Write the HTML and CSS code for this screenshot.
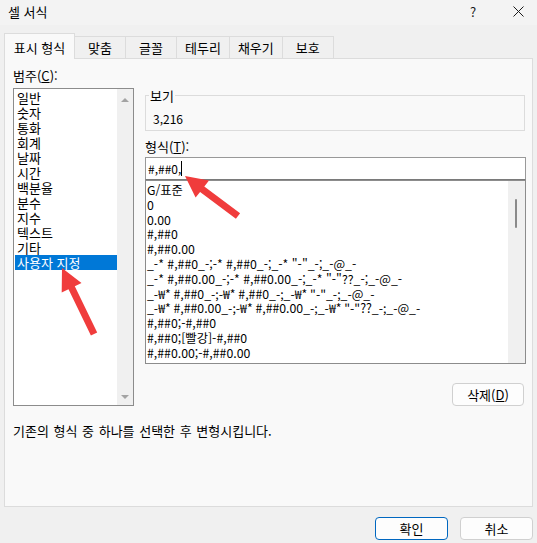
FILE: index.html
```html
<!DOCTYPE html>
<html lang="ko">

<head>
  <meta charset="UTF-8">
  <title>셀 서식</title>
  <link rel="stylesheet" href="styles.css">
</head>

<body>

  <div class="dialog">

    <header class="titlebar">
      <span class="title">셀 서식</span>
      <div class="caption-btns">
        <span class="cap-btn help">?</span>
        <span class="cap-btn">
          <svg width="11" height="11" viewBox="0 0 11 11">
            <path d="M0.5 0.5 L10.5 10.5 M10.5 0.5 L0.5 10.5" stroke="#1a1a1a" stroke-width="1" fill="none" />
          </svg>
        </span>
      </div>
    </header>

    <nav class="tabs">
      <span class="tab active">표시 형식</span>
      <span class="tab">맞춤</span>
      <span class="tab">글꼴</span>
      <span class="tab">테두리</span>
      <span class="tab">채우기</span>
      <span class="tab">보호</span>
    </nav>

    <section class="panel">

      <div class="col-category">
        <div class="label">범주(<u>C</u>):</div>
        <div class="listbox category-list">
          <ul class="items">
            <li>일반</li>
            <li>숫자</li>
            <li>통화</li>
            <li>회계</li>
            <li>날짜</li>
            <li>시간</li>
            <li>백분율</li>
            <li>분수</li>
            <li>지수</li>
            <li>텍스트</li>
            <li>기타</li>
            <li class="selected">사용자 지정</li>
          </ul>
          <div class="vscroll">
            <span class="arrow up"></span>
            <span class="arrow down"></span>
          </div>
        </div>
      </div>

      <div class="col-format">
        <fieldset class="preview">
          <legend>보기</legend>
          <div class="sample">3,216</div>
        </fieldset>

        <div class="label format-label">형식(<u>T</u>):</div>
        <div class="format-input">#,##0,<span class="caret"></span></div>

        <div class="listbox format-list">
          <ul class="items">
            <li>G/표준</li>
            <li>0</li>
            <li>0.00</li>
            <li>#,##0</li>
            <li>#,##0.00</li>
            <li>_-* #,##0_-;-* #,##0_-;_-* "-"_-;_-@_-</li>
            <li>_-* #,##0.00_-;-* #,##0.00_-;_-* "-"??_-;_-@_-</li>
            <li>_-₩* #,##0_-;-₩* #,##0_-;_-₩* "-"_-;_-@_-</li>
            <li>_-₩* #,##0.00_-;-₩* #,##0.00_-;_-₩* "-"??_-;_-@_-</li>
            <li>#,##0;-#,##0</li>
            <li>#,##0;[빨강]-#,##0</li>
            <li>#,##0.00;-#,##0.00</li>
          </ul>
          <div class="vscroll">
            <span class="thumb"></span>
          </div>
        </div>

        <div class="row-end">
          <button class="btn">삭제(<u>D</u>)</button>
        </div>
      </div>

      <p class="hint">기존의 형식 중 하나를 선택한 후 변형시킵니다.</p>
    </section>

    <footer class="actions">
      <button class="btn primary">확인</button>
      <button class="btn">취소</button>
    </footer>

    <!-- red pointer arrows drawn over the dialog -->
    <svg class="marks" width="537" height="543" viewBox="0 0 537 543">
      <polygon fill="#f03c3c"
        points="185,176 209,180.5 204.3,186.4 240.1,213.2 235.9,218.8 200.1,192 195.6,197.6" />
      <polygon fill="#f03c3c"
        points="62,268 81.5,283 74.8,286.3 97.2,332.5 90.9,335.5 68.5,289.3 61.7,292.6" />
    </svg>
  </div>

</body>

</html>
```

FILE: styles.css
```css
* {
  box-sizing: border-box;
}

body {
  margin: 0;
  background: #f0f0f0;
  font-family: "Noto Sans CJK KR", "Noto Sans", sans-serif;
  font-size: 13px;
  line-height: 15px;
  color: #000;
  overflow: hidden;
}

.dialog {
  position: relative;
  width: 537px;
  height: 543px;
}

/* title bar */
.titlebar {
  height: 25px;
  background: #f3f3f3;
  display: flex;
  justify-content: space-between;
  align-items: flex-start;
  padding: 4px 0 0 8px;
}

.caption-btns {
  display: flex;
  gap: 7px;
}

.cap-btn {
  width: 38px;
  height: 15px;
  display: flex;
  justify-content: center;
  align-items: center;
}

.cap-btn.help {
  font-size: 13px;
  color: #1a1a1a;
}

/* tabs */
.tabs {
  height: 33px;
  display: flex;
  align-items: flex-end;
  padding-left: 4px;
}

.tab {
  min-width: 52px;
  height: 22px;
  padding: 3px 8px 0;
  margin-left: -1px;
  text-align: center;
  border: 1px solid #dcdcdc;
  border-bottom: none;
  background: #f0f0f0;
}

.tab.active {
  position: relative;
  z-index: 1;
  margin-left: 0;
  width: 71px;
  height: 26px;
  margin-bottom: -1px;
  padding: 6px 0 0;
  background: #f9f9f9;
}

/* tab page */
.panel {
  height: 449px;
  margin: 0 4px;
  border: 1px solid #dcdcdc;
  background: #f9f9f9;
  display: grid;
  grid-template-columns: 121px 381px;
  column-gap: 11px;
  row-gap: 17px;
  align-content: start;
  padding: 9px 6px 0 8px;
}

.label {
  height: 15px;
}

.listbox {
  border: 1px solid #8c8c8c;
  background: #fff;
  display: flex;
}

.items {
  list-style: none;
  margin: 0;
  flex: 1;
}

.items li {
  height: 15px;
  white-space: nowrap;
}

.vscroll {
  background: #f0f0f0;
  position: relative;
}

/* category list */
.category-list {
  margin-top: 5px;
  height: 318px;
}

.category-list .items {
  padding: 1px 0 0;
}

.category-list .items li {
  margin-left: 1px;
  padding-left: 2px;
}

.category-list .items li.selected {
  background: #0078d7;
  color: #fff;
}

.category-list .vscroll {
  width: 16px;
  display: flex;
  flex-direction: column;
  justify-content: space-between;
  align-items: center;
  padding: 9px 0 6px;
}

.arrow {
  width: 0;
  height: 0;
  border-left: 4px solid transparent;
  border-right: 4px solid transparent;
}

.arrow.up {
  border-bottom: 4px solid #a3a3a3;
}

.arrow.down {
  border-top: 4px solid #a3a3a3;
}

/* format side */
.col-format {
  margin-top: 20px;
}

.preview {
  margin: 0 1px 0 0;
  border: 1px solid #dcdcdc;
  padding: 8px 7px 4px;
}

.preview legend {
  margin-left: -4px;
  padding: 0 1px;
  line-height: 15px;
}

.sample {
  font-size: 12px;
}

.format-label {
  margin-top: 8px;
}

.format-input {
  margin-top: 3px;
  height: 23px;
  border: 1px solid #999;
  border-bottom-color: #7a7a7a;
  background: #fff;
  padding: 3px 0 0 2px;
  font-size: 12px;
}

.caret {
  display: inline-block;
  width: 1px;
  height: 15px;
  background: #000;
  vertical-align: top;
}

.format-list {
  height: 184px;
}

.format-list .items {
  padding: 2px 0 0 1px;
  overflow: hidden;
  font-size: 12.3px;
}

.format-list .items li {
  height: 14.8px;
  line-height: 14.8px;
}

.format-list .vscroll {
  width: 17px;
}

.thumb {
  position: absolute;
  top: 18px;
  left: 7px;
  width: 2px;
  height: 29px;
  border-radius: 1px;
  background: #8a8a8a;
}

.row-end {
  display: flex;
  justify-content: flex-end;
  margin-top: 19px;
  padding-right: 2px;
}

.hint {
  grid-column: 1 / 3;
  margin: 0;
  word-spacing: 1px;
}

/* buttons */
.btn {
  width: 72px;
  height: 23px;
  padding: 0;
  font: inherit;
  color: #000;
  background: #fdfdfd;
  border: 1px solid #d0d0d0;
  border-radius: 4px;
}

.btn.primary {
  border-color: #0067c0;
}

.actions {
  display: flex;
  justify-content: flex-end;
  gap: 12px;
  padding: 10px 4px 0 0;
}

.actions .btn {
  width: 73px;
}

.marks {
  position: absolute;
  top: 0;
  left: 0;
  pointer-events: none;
}
```
